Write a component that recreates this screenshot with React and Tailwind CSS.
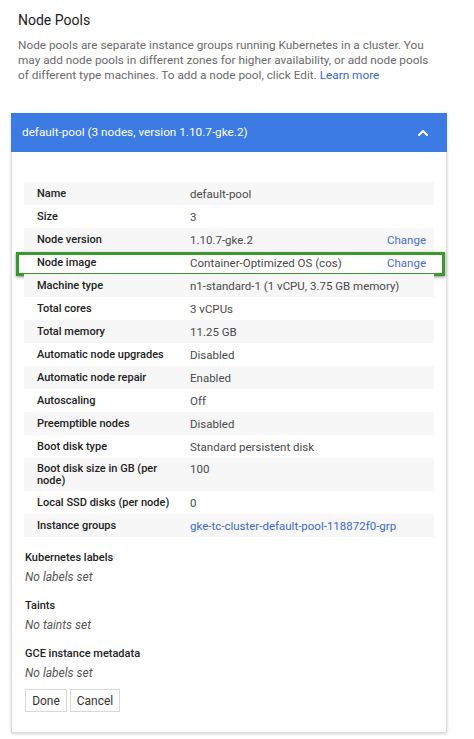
import React from 'react';
import { ChevronUp } from 'lucide-react';

const rows = [
  { label: 'Name', value: 'default-pool' },
  { label: 'Size', value: '3' },
  { label: 'Node version', value: '1.10.7-gke.2', change: true },
  { label: 'Node image', value: 'Container-Optimized OS (cos)', change: true, highlight: true },
  { label: 'Machine type', value: 'n1-standard-1 (1 vCPU, 3.75 GB memory)' },
  { label: 'Total cores', value: '3 vCPUs' },
  { label: 'Total memory', value: '11.25 GB' },
  { label: 'Automatic node upgrades', value: 'Disabled' },
  { label: 'Automatic node repair', value: 'Enabled' },
  { label: 'Autoscaling', value: 'Off' },
  { label: 'Preemptible nodes', value: 'Disabled' },
  { label: 'Boot disk type', value: 'Standard persistent disk' },
  { label: 'Boot disk size in GB (per node)', value: '100', tall: true },
  { label: 'Local SSD disks (per node)', value: '0' },
  { label: 'Instance groups', value: 'gke-tc-cluster-default-pool-118872f0-grp', link: true },
];

const sections = [
  { title: 'Kubernetes labels', empty: 'No labels set' },
  { title: 'Taints', empty: 'No taints set' },
  { title: 'GCE instance metadata', empty: 'No labels set' },
];

function DetailRow({ row, striped }) {
  return (
    <div
      className={`relative flex items-start leading-[12px] ${row.tall ? 'py-[4.5px]' : 'py-[5.5px]'} ${
        striped ? 'bg-[#f7f7f7]' : 'bg-white'
      }`}
    >
      <div className="w-[166px] shrink-0 pl-[13px] pr-[16px] text-[11px] font-medium text-[#222]">{row.label}</div>
      <div className={`flex-1 text-[11.5px] ${row.link ? 'text-[#3f69d0]' : 'text-[#4a4a4a]'}`}>{row.value}</div>
      {row.change && <div className="pr-[8px] text-[11.5px] text-[#4a6cd4]">Change</div>}
      {row.highlight && (
        <span className="pointer-events-none absolute -left-[8px] -right-[11px] top-[1px] -bottom-[2px] border-[3px] border-[#3a9a2e] shadow-[0_1px_3px_rgba(0,0,0,0.45)]" />
      )}
    </div>
  );
}

export default function App() {
  return (
    <div className="h-[739px] w-[474px] bg-white pt-[11px] font-['Roboto',sans-serif]">
      <div className="pl-[18px] pr-[20px]">
        <h1 className="text-[14px] leading-[18px] text-[#212121]">Node Pools</h1>
        <p className="mt-[9px] whitespace-nowrap text-[11.8px] leading-[15px] text-[#6b6b6b]">
          Node pools are separate instance groups running Kubernetes in a cluster. You
          <br />
          may add node pools in different zones for higher availability, or add node pools
          <br />
          of different type machines. To add a node pool, click Edit. <span className="text-[#3367d6]">Learn more</span>
        </p>
      </div>

      <section className="ml-[11px] mt-[30px] w-[436px] shadow-[0_1px_3px_rgba(0,0,0,0.18)]">
        <div className="flex h-[39px] items-center justify-between bg-[#3c7be4] pl-[11px] pr-[16px]">
          <span className="text-[11.75px] text-white">default-pool (3 nodes, version 1.10.7-gke.2)</span>
          <ChevronUp className="h-[16px] w-[16px] text-white" strokeWidth={3} />
        </div>

        <div className="border-x border-b border-[#dedede] px-[12px] pt-[30px] pb-[20px]">
          <div>
            {rows.map((row, i) => (
              <DetailRow key={row.label} row={row} striped={i % 2 === 0} />
            ))}
          </div>

          <div className="mt-[13px] space-y-[12px] pl-[1px]">
            {sections.map((s) => (
              <div key={s.title}>
                <p className="text-[11px] font-medium leading-[15px] text-[#222]">{s.title}</p>
                <p className="mt-[3px] text-[12px] italic leading-[18px] text-[#555]">{s.empty}</p>
              </div>
            ))}
          </div>

          <div className="mt-[7px] flex gap-[3px] pl-[1px]">
            <button className="h-[23px] w-[42px] border border-[#d9d9d9] bg-white text-[12px] text-[#333]">Done</button>
            <button className="h-[23px] w-[50px] border border-[#d9d9d9] bg-white text-[12px] text-[#333]">Cancel</button>
          </div>
        </div>
      </section>
    </div>
  );
}
